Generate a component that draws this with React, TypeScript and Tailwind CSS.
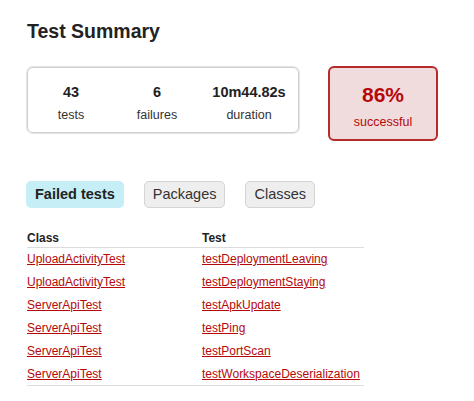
const failures = [
  ["UploadActivityTest", "testDeploymentLeaving"],
  ["UploadActivityTest", "testDeploymentStaying"],
  ["ServerApiTest", "testApkUpdate"],
  ["ServerApiTest", "testPing"],
  ["ServerApiTest", "testPortScan"],
  ["ServerApiTest", "testWorkspaceDeserialization"],
];

function Counter({ value, label, width }: { value: string; label: string; width: string }) {
  return (
    <div className={`${width} flex flex-col items-center`}>
      <div className="text-[14.5px] font-bold leading-[17px] text-[#222]">{value}</div>
      <div className="mt-[7px] text-[12.5px] leading-[15px] text-[#333]">{label}</div>
    </div>
  );
}

export default function App() {
  return (
    <div className="min-h-[401px] bg-white pl-[27px] pt-[20px] font-['Liberation_Sans',Arial,sans-serif] text-[#222]">
      {/* Title */}
      <h1 className="text-[19.5px] font-bold leading-[22px]">Test Summary</h1>

      {/* Summary */}
      <div className="mt-[25px] flex items-start gap-[29px]">
        <div className="flex h-[66px] w-[272px] items-start rounded-[6px] border border-[#d0d0d0] pl-[7px] pt-[16px] shadow-[0_0_0_1px_#e4e4e4]">
          <Counter value="43" label="tests" width="w-[72px]" />
          <div className="w-[10px]" />
          <Counter value="6" label="failures" width="w-[80px]" />
          <div className="w-[10px]" />
          <Counter value="10m44.82s" label="duration" width="w-[84px]" />
        </div>
        <div className="-mt-px flex h-[75px] w-[110px] flex-col items-center rounded-[6px] border-2 border-[#b52a2a] bg-[#f0dcdc] pt-[15px] text-[#b60808]">
          <div className="text-[21px] font-bold leading-[24px]">86%</div>
          <div className="mt-[8px] text-[12.5px] leading-[15px]">successful</div>
        </div>
      </div>

      {/* Tabs */}
      <div className="mt-[40px] flex items-center gap-[20px] text-[14.5px] leading-[17px]">
        <div className="-ml-px rounded-[5px] bg-[#c5eef6] px-[9px] py-[5px] font-bold">Failed tests</div>
        <div className="rounded-[5px] border border-[#d4d4d4] bg-[#eeeeee] px-[8px] py-[4px] text-[#333]">Packages</div>
        <div className="rounded-[5px] border border-[#d4d4d4] bg-[#eeeeee] px-[8px] py-[4px] text-[#333]">Classes</div>
      </div>

      {/* Failed tests table */}
      <table className="mt-[23px] w-[337px] border-collapse text-[12px] leading-[14px]">
        <thead>
          <tr className="border-b border-[#dcdcdc]">
            <th className="w-[175px] p-0 pb-[2px] text-left font-bold">Class</th>
            <th className="p-0 pb-[2px] text-left font-bold">Test</th>
          </tr>
        </thead>
        <tbody>
          {failures.map(([cls, test], i) => (
            <tr key={i} className={`h-[23px] ${i === failures.length - 1 ? "border-b border-[#dcdcdc]" : ""}`}>
              <td className="p-0 align-middle">
                <a href="#" className="text-[#b60808] underline">{cls}</a>
              </td>
              <td className="p-0 align-middle">
                <a href="#" className="text-[#b60808] underline">{test}</a>
              </td>
            </tr>
          ))}
        </tbody>
      </table>
    </div>
  );
}
